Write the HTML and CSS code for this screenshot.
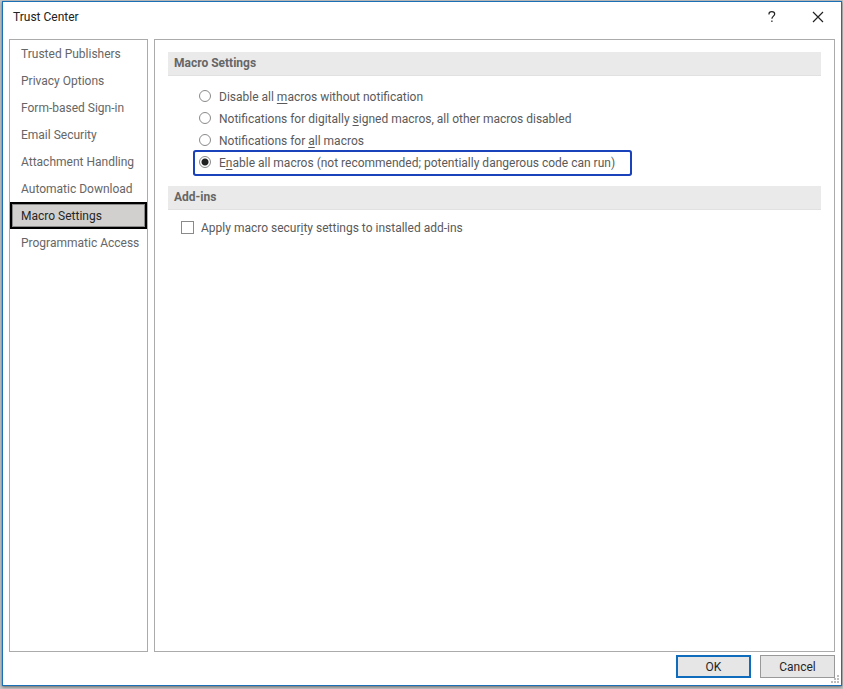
FILE: index.html
```html
<!DOCTYPE html>
<html lang="en">
<head>
  <meta charset="UTF-8">
  <title>Trust Center</title>
  <link rel="stylesheet" href="styles.css">
</head>
<body>

<div class="dialog">
  <header class="titlebar">
    <h1>Trust Center</h1>
    <button class="title-btn" type="button" aria-label="Help">
      <svg width="10" height="14" viewBox="0 0 10 14">
        <path d="M2 4.6V3.8C2 2.3 3.2 1.6 4.8 1.6S7.7 2.4 7.7 4C7.7 6.1 4.9 6.2 4.9 8.8"/>
        <path d="M4.9 10.4V12"/>
      </svg>
    </button>
    <button class="title-btn" type="button" aria-label="Close">
      <svg width="12" height="12" viewBox="0 0 12 12">
        <path d="M1 1l10 10M11 1L1 11"/>
      </svg>
    </button>
  </header>

  <div class="content">
    <nav class="sidebar">
      <a href="#">Trusted Publishers</a>
      <a href="#">Privacy Options</a>
      <a href="#">Form-based Sign-in</a>
      <a href="#">Email Security</a>
      <a href="#">Attachment Handling</a>
      <a href="#">Automatic Download</a>
      <a href="#" class="active">Macro Settings</a>
      <a href="#">Programmatic Access</a>
    </nav>

    <main class="panel">
      <h2>Macro Settings</h2>
      <div class="options">
        <label class="option"><input type="radio" name="macros"><span>Disable all <u>m</u>acros without notification</span></label>
        <label class="option"><input type="radio" name="macros"><span>Notifications for digitally <u>s</u>igned macros, all other macros disabled</span></label>
        <label class="option"><input type="radio" name="macros"><span>Notifications for <u>a</u>ll macros</span></label>
        <label class="option highlight"><input type="radio" name="macros" checked><span>E<u>n</u>able all macros (not recommended; potentially dangerous code can run)</span></label>
      </div>

      <h2>Add-ins</h2>
      <div class="addins">
        <label class="option"><input type="checkbox"><span>Apply macro secur<u>i</u>ty settings to installed add-ins</span></label>
      </div>
    </main>
  </div>

  <footer class="footer">
    <button class="btn primary" type="button">OK</button>
    <button class="btn" type="button">Cancel</button>
  </footer>

  <svg class="grip" width="8" height="8" viewBox="0 0 8 8">
    <path d="M6 0h2v2H6zM3 3h2v2H3zM6 3h2v2H6zM0 6h2v2H0zM3 6h2v2H3zM6 6h2v2H6z"/>
  </svg>
</div>

</body>
</html>
```
FILE: styles.css
```css
* {
  box-sizing: border-box;
}

body {
  margin: 0;
  height: 100vh;
  padding: 1px 1px 3px 2px;
  display: flex;
  background: #c8c8c8;
  font-family: Roboto, "Liberation Sans", sans-serif;
  font-size: 12px;
  line-height: 16px;
  color: #5a5a5a;
}

.dialog {
  position: relative;
  flex: 1;
  display: flex;
  flex-direction: column;
  padding: 0 6px 7px;
  background: #fff;
  border: 1px solid #1a6fb5;
  box-shadow: 0 1px 3px rgba(0, 0, 0, 0.5);
}

.titlebar {
  display: flex;
  align-items: center;
  height: 37px;
  padding: 0 4px 7px;
}

.titlebar h1 {
  flex: 1;
  margin: 0;
  font-size: 12px;
  font-weight: normal;
  color: #222;
}

.title-btn {
  display: flex;
  align-items: center;
  justify-content: center;
  width: 46px;
  height: 28px;
  padding: 0;
  border: none;
  background: none;
}

.title-btn:last-child {
  width: 26px;
  margin-left: 10px;
}

.title-btn svg {
  fill: none;
  stroke: #222;
  stroke-width: 1.2;
}

.content {
  flex: 1;
  display: flex;
  gap: 6px;
}

.sidebar,
.panel {
  border: 1px solid #ababab;
}

.sidebar {
  width: 139px;
}

.sidebar a {
  display: block;
  height: 27px;
  padding: 6px 11px;
  color: #666;
  text-decoration: none;
  white-space: nowrap;
}

.sidebar a.active {
  padding: 4px 9px;
  background: #d2d0ce;
  border: 2px solid #000;
  outline: 1px solid #8a8a8a;
  outline-offset: -3px;
  color: #262626;
}

.panel {
  flex: 1;
  padding: 12px 13px;
}

.panel h2 {
  height: 24px;
  margin: 0;
  padding: 3px 6px;
  background: #eaeaea;
  border-bottom: 1px solid #e1e1e1;
  font-size: 12px;
  font-weight: bold;
  color: #666;
}

.options {
  display: flex;
  flex-direction: column;
  align-items: flex-start;
  padding: 10px 0 12px 27px;
}

.option {
  display: flex;
  align-items: center;
  gap: 8px;
  height: 22px;
  padding: 0 15px 0 4px;
}

.option u {
  text-underline-offset: 2px;
}

.option input {
  appearance: none;
  flex: none;
  margin: 0 0 2px;
  border: 1px solid #8a8a8a;
  background: #fff;
}

.option input[type="radio"] {
  width: 12px;
  height: 12px;
  border-radius: 50%;
}

.option input[type="radio"]:checked {
  background: radial-gradient(circle, #222 0 3px, #fff 4px);
}

.option input[type="checkbox"] {
  width: 13px;
  height: 13px;
}

.highlight {
  border-radius: 1px;
  box-shadow: 0 0 0 2px #1a43bb;
}

.addins {
  padding: 7px 9px;
}

.addins .option {
  gap: 7px;
}

.footer {
  display: flex;
  justify-content: flex-end;
  gap: 9px;
  padding-top: 3px;
}

.btn {
  width: 75px;
  height: 23px;
  padding: 0;
  border: 1px solid #999;
  background: #e6e6e6;
  font: inherit;
  color: #262626;
}

.btn.primary {
  border: 2px solid #0f6cbd;
}

.grip {
  position: absolute;
  right: 2px;
  bottom: 2px;
  fill: #bdbdbd;
}
```
